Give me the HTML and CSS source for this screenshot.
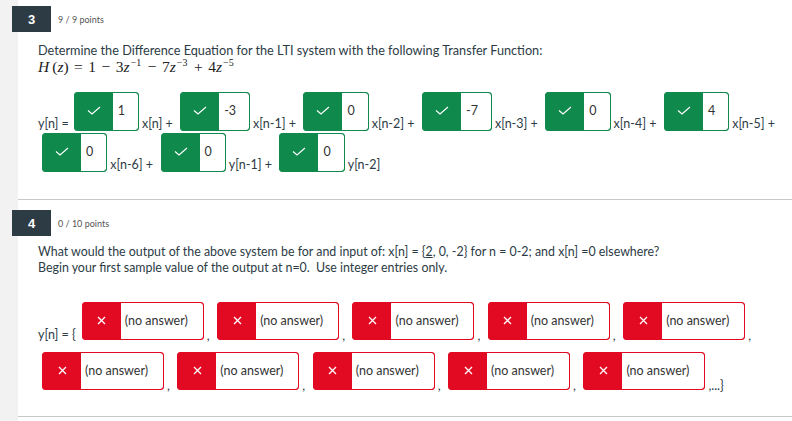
FILE: index.html
```html
<!DOCTYPE html>
<html>
<head>
<meta charset="utf-8">
<link rel="stylesheet" href="styles.css">
</head>
<body>
<div class="page">
  <div class="rail"></div>
  <div class="main">
    <section class="question q3">
      <div class="qhead">
        <div class="badge">3</div>
        <div class="points">9 / 9 points</div>
      </div>
      <p class="prompt">Determine the Difference Equation for the LTI system with the following Transfer Function:</p>
      <div class="math"><i>H</i><span class="sp1"></span>(<i>z</i>)<span class="op">=</span>1<span class="op">−</span>3<i>z</i><sup>−1</sup><span class="op">−</span>7<i>z</i><sup>−3</sup><span class="op">+</span>4<i>z</i><sup>−5</sup></div>

      <div class="row r3a">
        <span class="lbl">y[n] =</span>
        <span class="ans ok"><span class="mark"><svg width="14" height="9" viewBox="0 0 14 9"><polyline points="1,4.5 5,8 13,1" fill="none" stroke="#fff" stroke-width="1.1"/></svg></span><span class="val">1</span></span>
        <span class="term">x[n] +</span>
        <span class="ans ok"><span class="mark"><svg width="14" height="9" viewBox="0 0 14 9"><polyline points="1,4.5 5,8 13,1" fill="none" stroke="#fff" stroke-width="1.1"/></svg></span><span class="val">-3</span></span>
        <span class="term">x[n-1] +</span>
        <span class="ans ok"><span class="mark"><svg width="14" height="9" viewBox="0 0 14 9"><polyline points="1,4.5 5,8 13,1" fill="none" stroke="#fff" stroke-width="1.1"/></svg></span><span class="val">0</span></span>
        <span class="term">x[n-2] +</span>
        <span class="ans ok"><span class="mark"><svg width="14" height="9" viewBox="0 0 14 9"><polyline points="1,4.5 5,8 13,1" fill="none" stroke="#fff" stroke-width="1.1"/></svg></span><span class="val">-7</span></span>
        <span class="term">x[n-3] +</span>
        <span class="ans ok"><span class="mark"><svg width="14" height="9" viewBox="0 0 14 9"><polyline points="1,4.5 5,8 13,1" fill="none" stroke="#fff" stroke-width="1.1"/></svg></span><span class="val">0</span></span>
        <span class="term">x[n-4] +</span>
        <span class="ans ok"><span class="mark"><svg width="14" height="9" viewBox="0 0 14 9"><polyline points="1,4.5 5,8 13,1" fill="none" stroke="#fff" stroke-width="1.1"/></svg></span><span class="val">4</span></span>
        <span class="term">x[n-5] +</span>
      </div>
      <div class="row r3b">
        <span class="ans ok first"><span class="mark"><svg width="14" height="9" viewBox="0 0 14 9"><polyline points="1,4.5 5,8 13,1" fill="none" stroke="#fff" stroke-width="1.1"/></svg></span><span class="val">0</span></span>
        <span class="term">x[n-6] +</span>
        <span class="ans ok"><span class="mark"><svg width="14" height="9" viewBox="0 0 14 9"><polyline points="1,4.5 5,8 13,1" fill="none" stroke="#fff" stroke-width="1.1"/></svg></span><span class="val">0</span></span>
        <span class="term">y[n-1] +</span>
        <span class="ans ok"><span class="mark"><svg width="14" height="9" viewBox="0 0 14 9"><polyline points="1,4.5 5,8 13,1" fill="none" stroke="#fff" stroke-width="1.1"/></svg></span><span class="val">0</span></span>
        <span class="term">y[n-2]</span>
      </div>
    </section>

    <section class="question q4">
      <div class="qhead">
        <div class="badge">4</div>
        <div class="points">0 / 10 points</div>
      </div>
      <p class="prompt2">What would the output of the above system be for and input of: x[n] = {<u>2</u>, 0, -2} for n = 0-2; and x[n] =0 elsewhere?<br>Begin your first sample value of the output at n=0.&nbsp; Use integer entries only.</p>

      <div class="row r4a">
        <span class="lbl">y[n] = {</span>
        <span class="ans bad"><span class="mark"><svg width="9" height="9" viewBox="0 0 9 9"><path d="M1 1L8 8M8 1L1 8" stroke="#fff" stroke-width="1.3"/></svg></span><span class="val">(no answer)</span></span><span class="sep">,</span>
        <span class="ans bad"><span class="mark"><svg width="9" height="9" viewBox="0 0 9 9"><path d="M1 1L8 8M8 1L1 8" stroke="#fff" stroke-width="1.3"/></svg></span><span class="val">(no answer)</span></span><span class="sep">,</span>
        <span class="ans bad"><span class="mark"><svg width="9" height="9" viewBox="0 0 9 9"><path d="M1 1L8 8M8 1L1 8" stroke="#fff" stroke-width="1.3"/></svg></span><span class="val">(no answer)</span></span><span class="sep">,</span>
        <span class="ans bad"><span class="mark"><svg width="9" height="9" viewBox="0 0 9 9"><path d="M1 1L8 8M8 1L1 8" stroke="#fff" stroke-width="1.3"/></svg></span><span class="val">(no answer)</span></span><span class="sep">,</span>
        <span class="ans bad"><span class="mark"><svg width="9" height="9" viewBox="0 0 9 9"><path d="M1 1L8 8M8 1L1 8" stroke="#fff" stroke-width="1.3"/></svg></span><span class="val">(no answer)</span></span><span class="sep">,</span>
      </div>
      <div class="row r4b">
        <span class="ans bad first"><span class="mark"><svg width="9" height="9" viewBox="0 0 9 9"><path d="M1 1L8 8M8 1L1 8" stroke="#fff" stroke-width="1.3"/></svg></span><span class="val">(no answer)</span></span><span class="sep">,</span>
        <span class="ans bad"><span class="mark"><svg width="9" height="9" viewBox="0 0 9 9"><path d="M1 1L8 8M8 1L1 8" stroke="#fff" stroke-width="1.3"/></svg></span><span class="val">(no answer)</span></span><span class="sep">,</span>
        <span class="ans bad"><span class="mark"><svg width="9" height="9" viewBox="0 0 9 9"><path d="M1 1L8 8M8 1L1 8" stroke="#fff" stroke-width="1.3"/></svg></span><span class="val">(no answer)</span></span><span class="sep">,</span>
        <span class="ans bad"><span class="mark"><svg width="9" height="9" viewBox="0 0 9 9"><path d="M1 1L8 8M8 1L1 8" stroke="#fff" stroke-width="1.3"/></svg></span><span class="val">(no answer)</span></span><span class="sep">,</span>
        <span class="ans bad"><span class="mark"><svg width="9" height="9" viewBox="0 0 9 9"><path d="M1 1L8 8M8 1L1 8" stroke="#fff" stroke-width="1.3"/></svg></span><span class="val">(no answer)</span></span><span class="sep">,...}</span>
      </div>
    </section>
  </div>
</div>
</body>
</html>
```

FILE: styles.css
```css
* { box-sizing: border-box; }
html, body { margin: 0; padding: 0; background: #fff; }
body {
  font-family: Lato, "Open Sans", sans-serif;
  font-size: 12px;
  color: #2d3b45;
}
.page { display: flex; min-height: 421px; }
.rail { width: 18px; flex-shrink: 0; background: #f2f2f2; }
.main { flex: 1; min-width: 0; }

.question {
  padding-left: 20px;
  border-bottom: 1px solid #c8c8c8;
}
.q3 { padding-top: 6px; padding-bottom: 27px; }
.q4 { padding-top: 10px; padding-bottom: 26px; }

.qhead { display: flex; align-items: center; margin-left: -26px; }
.badge {
  width: 39px; height: 26px;
  background: #2d3b45;
  color: #fff;
  font-family: "Liberation Sans", Arial, sans-serif;
  font-size: 13px;
  font-weight: bold;
  display: flex; align-items: center; justify-content: center;
}
.points { margin-left: 7px; font-size: 9px; color: #555; }

.prompt { margin: 11px 0 0; line-height: 15px; font-size: 12.7px; }
.math {
  font-family: "Liberation Serif", "Times New Roman", serif;
  font-size: 15.5px;
  line-height: 17px;
  height: 17px;
  color: #222;
}
.math sup { font-size: 10px; line-height: 0; vertical-align: 6px; margin-left: 1px; margin-right: 1px; }
.math .sp1 { display: inline-block; width: 3px; }
.math .op { padding: 0 5.5px; }

.prompt2 { margin: 8px 0 0; line-height: 16px; font-size: 12.4px; }
.prompt2 u { text-decoration: underline; }

.row { display: flex; align-items: flex-end; white-space: nowrap; font-size: 12.5px; }
.r3a { margin-top: 17px; }
.r3b { margin-top: 2px; }
.r4a { margin-top: 26px; }
.r4b { margin-top: 12px; }

.lbl { line-height: 15px; }
.term { line-height: 15px; margin-left: 3px; margin-right: 3.5px; }

.ans {
  display: flex;
  height: 39px;
  border-radius: 3px;
  overflow: hidden;
  margin-left: 4px;
}
.lbl + .ans { margin-left: 5px; }
.ans.first { margin-left: 4px; }
.ans .mark {
  width: 38px; flex-shrink: 0;
  display: flex; align-items: center; justify-content: center;
  padding-bottom: 2px;
}
.ans .val {
  display: flex; align-items: center;
  background: #fff;
  color: #333;
  padding-bottom: 2px;
  border-radius: 0 3px 3px 0;
}
.ok { background: #0f8a4c; border: 1px solid #0f8a4c; }
.ok .val { padding-left: 5px; padding-right: 13px; }

.q4 .ans { height: 38px; }
.bad { background: #e10a22; border: 1px solid #e10a22; width: 122px; }
.bad .val { flex: 1; padding-left: 4px; }
.q4 .lbl + .ans { margin-left: 6px; }
.q4 .lbl { margin-bottom: -2px; }
.sep { line-height: 15px; margin: 0 3.5px -3px 3px; }
.q4 .ans.first { margin-left: 4px; }
```
